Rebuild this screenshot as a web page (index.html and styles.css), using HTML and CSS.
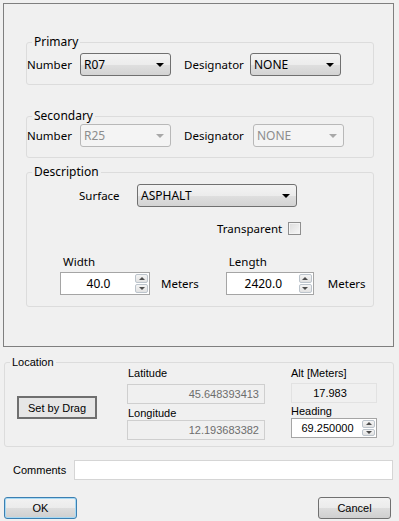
FILE: index.html
```html
<!DOCTYPE html>
<html lang="en">
<head>
    <meta charset="UTF-8">
    <title>Runway Properties</title>
    <link rel="stylesheet" href="styles.css">
</head>
<body>
<div class="dialog">
    <div class="panel">
        <fieldset class="group primary">
            <legend>Primary</legend>
            <div class="row">
                <span class="label number-label">Number</span>
                <div class="combo small"><span>R07</span><i class="arrow"></i></div>
                <span class="label designator-label">Designator</span>
                <div class="combo small"><span>NONE</span><i class="arrow"></i></div>
            </div>
        </fieldset>

        <fieldset class="group secondary">
            <legend>Secondary</legend>
            <div class="row">
                <span class="label number-label">Number</span>
                <div class="combo small disabled"><span>R25</span><i class="arrow"></i></div>
                <span class="label designator-label shifted">Designator</span>
                <div class="combo small disabled"><span>NONE</span><i class="arrow"></i></div>
            </div>
        </fieldset>

        <fieldset class="group description">
            <legend>Description</legend>
            <div class="surface-row">
                <span class="label surface-label">Surface</span>
                <div class="combo wide"><span>ASPHALT</span><i class="arrow"></i></div>
            </div>
            <div class="transparent-row">
                <span class="label">Transparent</span>
                <span class="checkbox"></span>
            </div>
            <div class="size-row">
                <div class="size-col width-col">
                    <span class="label">Width</span>
                    <div class="spin-line">
                        <div class="spin size-spin">
                            <span class="spin-value">40.0</span>
                            <span class="spinner"><b><i class="up"></i></b><b><i class="down"></i></b></span>
                        </div>
                        <span class="label">Meters</span>
                    </div>
                </div>
                <div class="size-col length-col">
                    <span class="label">Length</span>
                    <div class="spin-line">
                        <div class="spin size-spin">
                            <span class="spin-value">2420.0</span>
                            <span class="spinner"><b><i class="up"></i></b><b><i class="down"></i></b></span>
                        </div>
                        <span class="label">Meters</span>
                    </div>
                </div>
            </div>
        </fieldset>
    </div>

    <fieldset class="location">
        <legend>Location</legend>
        <div class="loc-row">
            <div class="btn drag">Set by Drag</div>
            <div class="loc-col coords">
                <span class="small-label">Latitude</span>
                <div class="field readonly first">45.648393413</div>
                <span class="small-label second">Longitude</span>
                <div class="field readonly">12.193683382</div>
            </div>
            <div class="loc-col alt">
                <span class="small-label">Alt [Meters]</span>
                <div class="field plain first">17.983</div>
                <span class="small-label second">Heading</span>
                <div class="spin heading-spin">
                    <span class="spin-value">69.250000</span>
                    <span class="spinner"><b><i class="up"></i></b><b><i class="down"></i></b></span>
                </div>
            </div>
        </div>
    </fieldset>

    <div class="comments">
        <span class="small-label">Comments</span>
        <div class="field comment-field"></div>
    </div>

    <div class="buttons">
        <div class="btn ok">OK</div>
        <div class="btn">Cancel</div>
    </div>
</div>
</body>
</html>
```

FILE: styles.css
```css
body {
    margin: 0;
    background: #f0f0f0;
    color: #000;
    font-family: "Noto Sans", sans-serif;
    font-size: 11.5px;
}
.dialog {
    width: 399px;
    display: flex;
    flex-direction: column;
}
.dialog > * {
    flex-shrink: 0;
}
.panel {
    box-sizing: border-box;
    margin: 3px 5px 0 3px;
    height: 344px;
    border: 1px solid #7f7f7f;
    display: flex;
    flex-direction: column;
    align-items: flex-start;
}
.label {
    line-height: 15px;
    white-space: nowrap;
}

/* group boxes */
.group {
    box-sizing: border-box;
    flex-shrink: 0;
    width: 348px;
    margin: 0 0 0 22px;
    padding: 0;
    border: 1px solid #dcdcdc;
    border-radius: 3px;
}
.group legend {
    margin-left: 5px;
    padding: 0 2px;
    line-height: 8px;
    font-size: 12px;
}
.primary {
    margin-top: 34px;
    padding: 7px 0 8px;
}
.secondary {
    margin-top: 27px;
    padding: 4px 0 10px;
}
.description {
    margin-top: 10px;
    padding: 8px 0 11px;
}
.row {
    display: flex;
    align-items: center;
}
.number-label {
    width: 53px;
}
.designator-label {
    margin-left: 13px;
    width: 66px;
}
.designator-label.shifted {
    width: 69px;
}

/* combo boxes */
.combo {
    box-sizing: border-box;
    height: 23px;
    display: flex;
    align-items: center;
    justify-content: space-between;
    padding: 0 6px 0 3px;
    border: 1px solid #707070;
    border-radius: 3px;
    background: linear-gradient(#f3f3f3, #ececec 50%, #dfdfdf 51%, #d3d3d3);
    font-size: 12px;
}
.combo.small {
    width: 91px;
}
.combo.wide {
    width: 160px;
}
.combo.disabled {
    border-color: #b8b8b8;
    background: #f4f4f4;
    color: #8d8d8d;
}
.arrow {
    width: 0;
    height: 0;
    border-left: 4px solid transparent;
    border-right: 4px solid transparent;
    border-top: 4px solid #000;
}
.disabled .arrow {
    border-top-color: #a8a8a8;
}

/* description contents */
.surface-row {
    display: flex;
    align-items: center;
    padding-left: 52px;
}
.surface-label {
    width: 58px;
}
.transparent-row {
    display: flex;
    align-items: center;
    margin: 14px 0 0 190px;
    gap: 6px;
}
.checkbox {
    box-sizing: border-box;
    width: 13px;
    height: 13px;
    border: 1px solid #8f8f8f;
    background: linear-gradient(135deg, #dcdcdc, #f8f8f8);
    box-shadow: inset 0 0 0 1px #f4f4f4;
}
.size-row {
    display: flex;
    margin-top: 18px;
}
.size-col {
    display: flex;
    flex-direction: column;
    gap: 3px;
}
.size-col > .label {
    padding-left: 3px;
}
.width-col {
    margin-left: 33px;
}
.length-col {
    margin-left: 27px;
}
.spin-line {
    display: flex;
    align-items: center;
    gap: 11px;
}
.length-col .spin-line {
    gap: 14px;
}
.length-col .size-spin {
    width: 88px;
}

/* numeric up-down */
.spin {
    box-sizing: border-box;
    height: 23px;
    display: flex;
    align-items: center;
    border: 1px solid #a5a5a5;
    background: #fff;
    padding: 1px;
}
.size-spin {
    width: 90px;
}
.spin-value {
    flex: 1;
    text-align: center;
    font-size: 12px;
}
.spinner {
    width: 13px;
    align-self: stretch;
    display: flex;
    flex-direction: column;
    gap: 1px;
}
.spinner b {
    flex: 1;
    display: flex;
    align-items: center;
    justify-content: center;
    border: 1px solid #bcc4cc;
    border-radius: 2px;
    background: linear-gradient(#f4f4f4, #e2e2e2);
}
.spinner .up,
.spinner .down {
    width: 0;
    height: 0;
    border-left: 3px solid transparent;
    border-right: 3px solid transparent;
}
.spinner .up {
    border-bottom: 3px solid #4d4d4d;
}
.spinner .down {
    border-top: 3px solid #4d4d4d;
}

/* location */
.location {
    box-sizing: border-box;
    width: 390px;
    margin: 11px 0 0 4px;
    padding: 1px 0 6px;
    border: 1px solid #dcdcdc;
    border-radius: 3px;
    font-family: "Liberation Sans", Arial, sans-serif;
    font-size: 10.5px;
}
.location legend {
    margin-left: 5px;
    padding: 0 2px;
    line-height: 8px;
    font-size: 11px;
}
.loc-row {
    display: flex;
    align-items: flex-start;
}
.small-label {
    font-family: "Liberation Sans", Arial, sans-serif;
    font-size: 11px;
    line-height: 13px;
    white-space: nowrap;
}
.loc-col {
    display: flex;
    flex-direction: column;
}
.coords {
    width: 138px;
    margin-left: 30px;
}
.coords .small-label {
    padding-left: 1px;
}
.coords .first {
    margin-top: 4px;
}
.coords .second {
    margin-top: 3px;
}
.alt {
    width: 86px;
    margin-left: 26px;
}
.alt .first {
    margin-top: 3px;
}
.alt .second {
    margin-top: 2px;
}
.field {
    box-sizing: border-box;
    height: 20px;
    line-height: 18px;
    border: 1px solid #cfcfcf;
    font-family: "Liberation Sans", Arial, sans-serif;
    font-size: 11px;
}
.field.readonly {
    background: #f0f0f0;
    color: #6d6d6d;
    text-align: right;
    padding-right: 5px;
}
.field.plain {
    background: #f0f0f0;
    border-color: #e2e2e2;
    text-align: center;
    padding-right: 8px;
}
.heading-spin {
    height: 20px;
    width: 86px;
    border-color: #a5a5a5;
}
.heading-spin .spin-value {
    font-family: "Liberation Sans", Arial, sans-serif;
    font-size: 11px;
}

/* buttons */
.btn {
    box-sizing: border-box;
    display: flex;
    align-items: center;
    justify-content: center;
    width: 73px;
    height: 22px;
    border: 1px solid #707070;
    border-radius: 3px;
    background: linear-gradient(#f2f2f2, #ebebeb 50%, #dddddd 51%, #cfcfcf);
    font-family: "Liberation Sans", Arial, sans-serif;
    font-size: 11px;
}
.btn.drag {
    width: 80px;
    height: 23px;
    margin: 29px 0 0 12px;
    border: 2px solid #6f6f6f;
    border-radius: 0;
    background: #e6e6e6;
}
.btn.ok {
    border-color: #3c7fb1;
    box-shadow: inset 0 0 0 1px #a6d9f4;
}

/* comments and footer */
.comments {
    display: flex;
    align-items: center;
    margin: 13px 6px 0 13px;
}
.comments .small-label {
    width: 61px;
}
.comment-field {
    flex: 1;
    background: #fff;
    border-color: #d5d5d5;
}
.buttons {
    display: flex;
    justify-content: space-between;
    margin: 17px 8px 0 4px;
}
```
